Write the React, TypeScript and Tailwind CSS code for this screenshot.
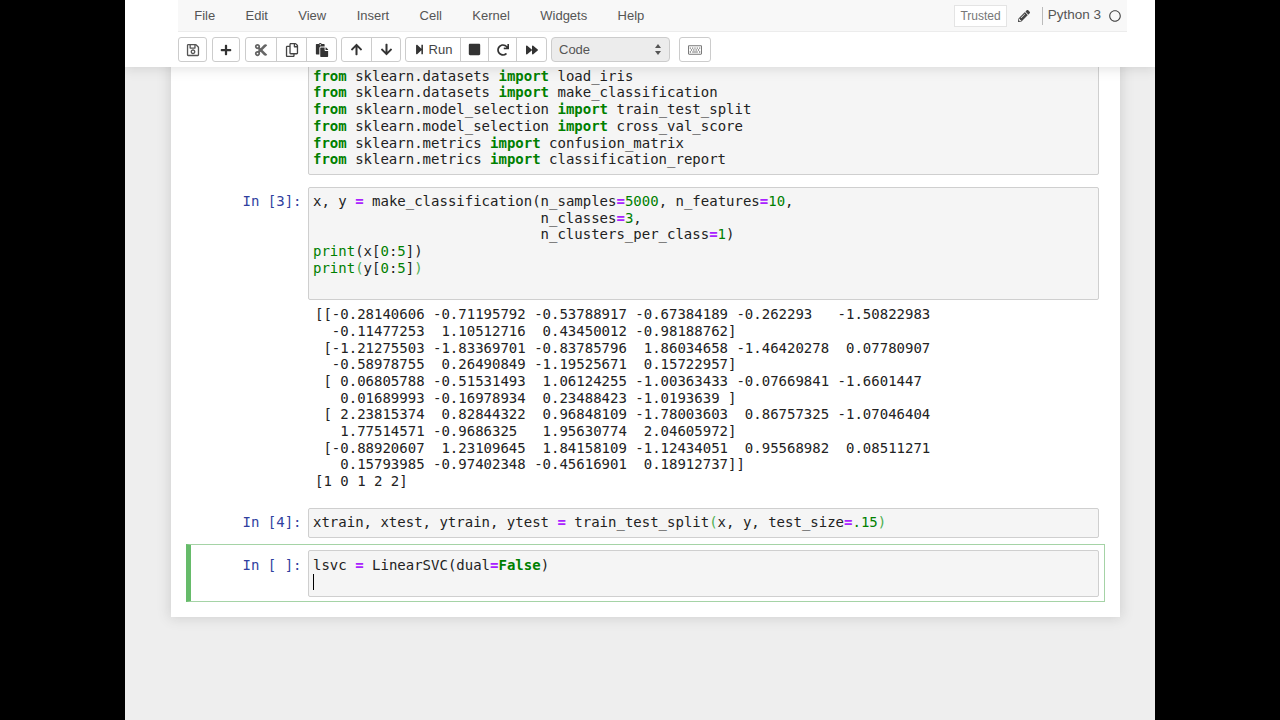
import type { ReactNode } from "react";
import {
  FaArrowDown,
  FaArrowUp,
  FaCut,
  FaForward,
  FaPaste,
  FaPencilAlt,
  FaPlus,
  FaRedo,
  FaRegCircle,
  FaRegCopy,
  FaRegKeyboard,
  FaRegSave,
  FaStepForward,
  FaStop,
} from "react-icons/fa";

const menu = ["File", "Edit", "View", "Insert", "Cell", "Kernel", "Widgets", "Help"];

const output = `[[-0.28140606 -0.71195792 -0.53788917 -0.67384189 -0.262293   -1.50822983
  -0.11477253  1.10512716  0.43450012 -0.98188762]
 [-1.21275503 -1.83369701 -0.83785796  1.86034658 -1.46420278  0.07780907
  -0.58978755  0.26490849 -1.19525671  0.15722957]
 [ 0.06805788 -0.51531493  1.06124255 -1.00363433 -0.07669841 -1.6601447
   0.01689993 -0.16978934  0.23488423 -1.0193639 ]
 [ 2.23815374  0.82844322  0.96848109 -1.78003603  0.86757325 -1.07046404
   1.77514571 -0.9686325   1.95630774  2.04605972]
 [-0.88920607  1.23109645  1.84158109 -1.12434051  0.95568982  0.08511271
   0.15793985 -0.97402348 -0.45616901  0.18912737]]
[1 0 1 2 2]`;

// syntax colours
const Kw = ({ children }: { children: ReactNode }) => (
  <span className="font-bold text-[#008000]">{children}</span>
);
const Op = ({ children }: { children: ReactNode }) => (
  <span className="font-bold text-[#aa22ff]">{children}</span>
);
const Num = ({ children }: { children: ReactNode }) => (
  <span className="text-[#008000]">{children}</span>
);
const Match = ({ children }: { children: ReactNode }) => (
  <span className="text-[#4caf50]">{children}</span>
);

const Import = ({ mod, name }: { mod: string; name: string }) => (
  <div>
    <Kw>from</Kw> {mod} <Kw>import</Kw> {name}
  </div>
);

const Btn = ({ children, className = "" }: { children: ReactNode; className?: string }) => (
  <div
    className={`flex items-center justify-center h-full text-[#333] border-l border-[#ccc] first:border-l-0 ${className}`}
  >
    {children}
  </div>
);

const Group = ({ children }: { children: ReactNode }) => (
  <div className="flex h-[25px] bg-white border border-[#ccc] rounded-[3px]">{children}</div>
);

const Cell = ({
  prompt,
  selected,
  children,
  after,
}: {
  prompt: string;
  selected?: boolean;
  children: ReactNode;
  after?: ReactNode;
}) => (
  <div
    className={`mx-[15px] flex border pt-[5px] pr-[5px] ${
      selected
        ? "border-[#a5d3a6] border-l-[5px] border-l-[#66bb6a] pl-0 pb-[4px]"
        : "border-transparent pl-[5px] pb-[5px]"
    }`}
  >
    <div
      className={`${selected ? "w-[117px] pt-[7px]" : "w-[116px] pt-[6px]"} shrink-0 pr-[6.5px] text-right leading-[16.7px] text-[#303f9f] whitespace-pre`}
    >
      {prompt}
    </div>
    <div className="flex-1 min-w-0">
      <div
        className={`bg-[#f5f5f5] border border-[#cfcfcf] rounded-[2px] pb-[6px] pl-[4px] leading-[16.7px] text-[#222] whitespace-pre ${
          selected ? "pt-[6px]" : "pt-[5px]"
        }`}
      >
        {children}
      </div>
      {after}
    </div>
  </div>
);

export default function App() {
  return (
    <div className="h-screen bg-black flex justify-center overflow-hidden font-['DejaVu_Sans_Mono',monospace] text-[14px]">
      <div className="w-[1030px] h-full bg-[#eeeeee] flex flex-col overflow-hidden">
        <header className="relative z-10 h-[67px] shrink-0 bg-white pl-[53px] shadow-[0_0_12px_1px_rgba(87,87,87,0.2)] font-['Liberation_Sans',Arial,sans-serif] text-[13px]">
          <div className="w-[949px] h-[32px] bg-[#f8f8f8] border-b border-[#ececec] flex items-center pl-[1px] text-[#555]">
            {menu.map((item) => (
              <span key={item} className="px-[15.2px]">
                {item}
              </span>
            ))}
            <div className="ml-auto flex items-center">
              <span className="h-[22px] px-[5px] flex items-center border border-[#e4e4e4] bg-white text-[12px] text-[#777]">
                Trusted
              </span>
              <FaPencilAlt className="ml-[11px] text-[12px] text-[#444]" />
              <span className="ml-[12px] w-px h-[18px] bg-[#bbb]" />
              <span className="ml-[5px] text-[13.5px] text-[#555]">Python 3</span>
              <FaRegCircle className="ml-[8px] mr-[6px] text-[12px] text-[#444]" />
            </div>
          </div>

          <div className="mt-[5px] flex items-center">
            <Group>
              <Btn className="w-[27px]">
                <FaRegSave className="text-[14px] text-[#555]" />
              </Btn>
            </Group>
            <div className="ml-[5px]">
              <Group>
                <Btn className="w-[26px]">
                  <FaPlus className="text-[12px]" />
                </Btn>
              </Group>
            </div>
            <div className="ml-[5px]">
              <Group>
                <Btn className="w-[30px]">
                  <FaCut className="text-[14px] text-[#666]" />
                </Btn>
                <Btn className="w-[30px]">
                  <FaRegCopy className="text-[14px] text-[#444]" />
                </Btn>
                <Btn className="w-[30px]">
                  <FaPaste className="text-[14px]" />
                </Btn>
              </Group>
            </div>
            <div className="ml-[4px]">
              <Group>
                <Btn className="w-[29px]">
                  <FaArrowUp className="text-[13px]" />
                </Btn>
                <Btn className="w-[29px]">
                  <FaArrowDown className="text-[13px]" />
                </Btn>
              </Group>
            </div>
            <div className="ml-[4px]">
              <Group>
                <Btn className="w-[54px] gap-[4px] text-[13px] text-[#444]">
                  <FaStepForward className="text-[11px] text-[#333]" />
                  <span>Run</span>
                </Btn>
                <Btn className="w-[28px]">
                  <FaStop className="text-[13px]" />
                </Btn>
                <Btn className="w-[28px]">
                  <FaRedo className="text-[12px]" />
                </Btn>
                <Btn className="w-[30px]">
                  <FaForward className="text-[12px]" />
                </Btn>
              </Group>
            </div>
            <div className="ml-[4px] w-[119px] h-[25px] flex items-center justify-between pl-[7px] pr-[8px] bg-[#ececec] border border-[#ccc] rounded-[4px] text-[#555]">
              <span>Code</span>
              <svg width="6" height="11" viewBox="0 0 6 11" className="fill-[#555]">
                <path d="M3 0 6 4H0zM3 11 0 7h6z" />
              </svg>
            </div>
            <div className="ml-[9px]">
              <Group>
                <Btn className="w-[30px]">
                  <FaRegKeyboard className="text-[14px] text-[#777]" />
                </Btn>
              </Group>
            </div>
          </div>
        </header>

        <main className="w-[949px] ml-[46px] mt-[-28px] shrink-0 bg-white pb-[15px] shadow-[0_0_12px_1px_rgba(87,87,87,0.2)]">
          <Cell prompt="">
            <Import mod="sklearn.svm" name="LinearSVC" />
            <Import mod="sklearn.datasets" name="load_iris" />
            <Import mod="sklearn.datasets" name="make_classification" />
            <Import mod="sklearn.model_selection" name="train_test_split" />
            <Import mod="sklearn.model_selection" name="cross_val_score" />
            <Import mod="sklearn.metrics" name="confusion_matrix" />
            <Import mod="sklearn.metrics" name="classification_report" />
          </Cell>

          <Cell
            prompt="In [3]:"
            after={
              <pre className="pt-[6px] pb-[6px] pl-[7px] leading-[16.7px] text-[#222] font-['DejaVu_Sans_Mono',monospace]">
                {output}
              </pre>
            }
          >
            <div>
              x, y <Op>=</Op> make_classification(n_samples<Op>=</Op>
              <Num>5000</Num>, n_features<Op>=</Op>
              <Num>10</Num>,
            </div>
            <div>
              {"                           "}n_classes<Op>=</Op>
              <Num>3</Num>,
            </div>
            <div>
              {"                           "}n_clusters_per_class<Op>=</Op>
              <Num>1</Num>)
            </div>
            <div>
              <Num>print</Num>(x[<Num>0</Num>:<Num>5</Num>])
            </div>
            <div>
              <Num>print</Num>
              <Match>(</Match>y[<Num>0</Num>:<Num>5</Num>]<Match>)</Match>
            </div>
            <div>{" "}</div>
          </Cell>

          <Cell prompt="In [4]:">
            <div>
              xtrain, xtest, ytrain, ytest <Op>=</Op> train_test_split<Match>(</Match>x, y, test_size<Op>=</Op>
              <Num>.15</Num>
              <Match>)</Match>
            </div>
          </Cell>

          <Cell prompt="In [ ]:" selected>
            <div>
              lsvc <Op>=</Op> LinearSVC(dual<Op>=</Op>
              <Kw>False</Kw>)
            </div>
            <div className="flex items-center h-[16.7px]">
              <span className="w-px h-[16px] bg-black" />
            </div>
          </Cell>
        </main>
      </div>
    </div>
  );
}
